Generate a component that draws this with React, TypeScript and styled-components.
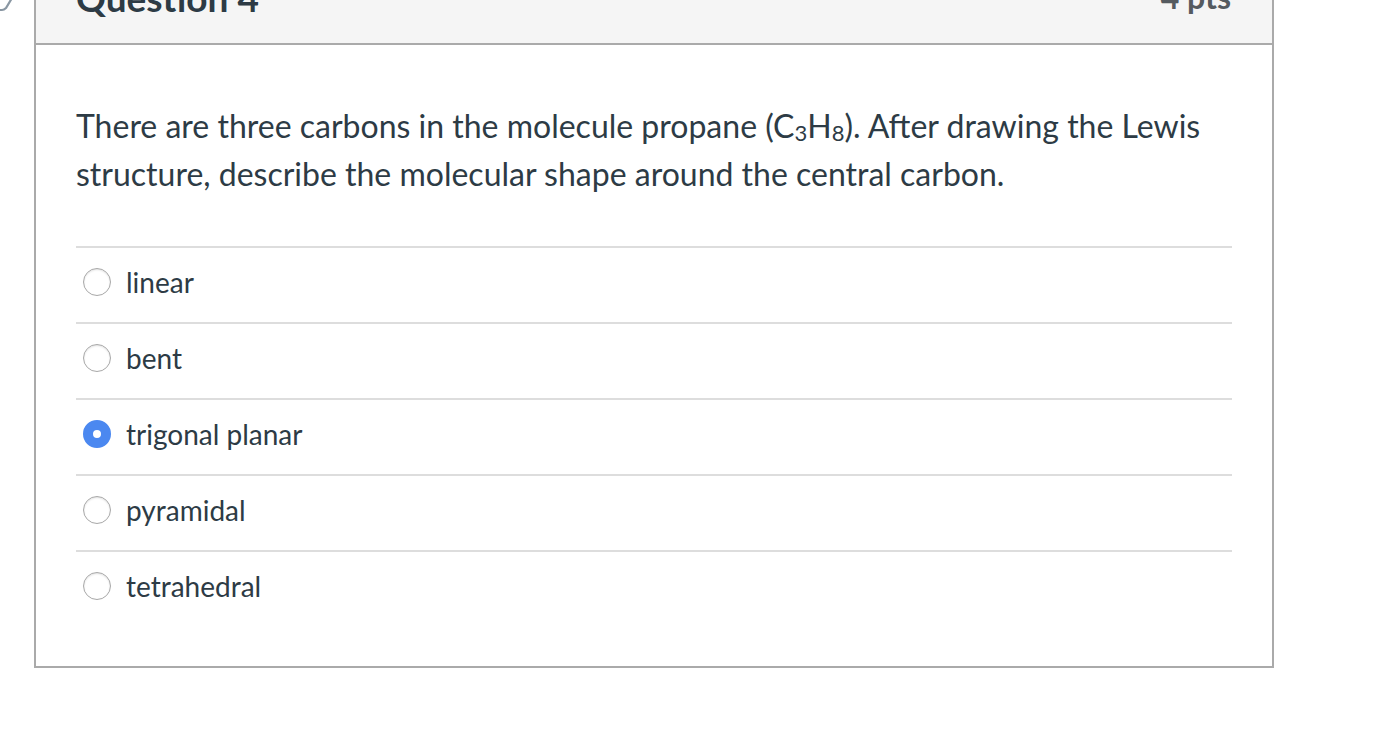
import React from 'react'
import styled, { createGlobalStyle } from 'styled-components';

const GlobalStyle = createGlobalStyle`
    body {
        margin: 0;
        background: #ffffff;
        font-family: Lato, "Liberation Sans", sans-serif;
        color: #2d3b45;
    }
`;

const answers = ['linear', 'bent', 'trigonal planar', 'pyramidal', 'tetrahedral'];

const App = () => {
    return (
        <>
            <GlobalStyle />
            <Page>
                <CheckMark width="14" height="12" viewBox="0 0 14 12">
                    <path d="M-4 10 L2 10 Q4 10 6 8 L12 -2" fill="none" stroke="#8a97a3" strokeWidth="2.2" strokeLinecap="round" />
                </CheckMark>
                <Card>
                    <Header>
                        <Title>Question 4</Title>
                        <Points>4 pts</Points>
                    </Header>
                    <Body>
                        <QuestionText>
                            There are three carbons in the molecule propane (C<Sub>3</Sub>H<Sub>8</Sub>). After drawing the Lewis structure, describe the molecular shape around the central carbon.
                        </QuestionText>
                        <AnswerList>
                            {answers.map(value => (
                                <Answer key={value}>
                                    <Radio checked={value === 'trigonal planar'} />
                                    <AnswerLabel>{value}</AnswerLabel>
                                </Answer>
                            ))}
                        </AnswerList>
                    </Body>
                </Card>
            </Page>
        </>
    );
}

const Page = styled("div")`
    position: relative;
    display: flow-root;
    padding: 0 126px 0 34px;
    width: 1240px;
`;

const CheckMark = styled("svg")`
    position: absolute;
    left: 0;
    top: 0;
    z-index: 2;
`;

const Card = styled("div")`
    margin-top: -33px;
    border: 2px solid #aaaaaa;
    background: #ffffff;
`;

const Header = styled("div")`
    display: flex;
    justify-content: space-between;
    align-items: center;
    height: 74px;
    padding: 0 41px 0 40px;
    background-color: #f5f5f5;
    border-bottom: 2px solid #aaaaaa;
`;

const Title = styled("h2")`
    margin: 0;
    font-size: 37px;
    font-weight: 700;
    color: #2d3b45;
    transform: translateY(-9px);
`;

const Points = styled("span")`
    font-size: 32px;
    font-weight: 700;
    color: #555b60;
    transform: translateY(-10px);
`;

const Body = styled("div")`
    padding: 57px 40px 40px 40px;
`;

const QuestionText = styled("p")`
    margin: 0;
    font-size: 32px;
    line-height: 48px;
    color: #2d3b45;
    padding-right: 10px;
`;

const Sub = styled("sub")`
    font-size: 22px;
    vertical-align: -3px;
    line-height: 0;
`;

const AnswerList = styled("div")`
    margin-top: 48px;
`;

const Answer = styled("div")`
    box-sizing: border-box;
    display: flex;
    align-items: center;
    height: 76px;
    padding: 0 0 6px 7px;
    border-top: 2px solid #dddddd;
`;

const Radio = styled("span")<{ checked?: boolean }>`
    box-sizing: border-box;
    flex-shrink: 0;
    width: 28px;
    height: 28px;
    border-radius: 50%;
    margin-right: 15px;
    border: ${p => p.checked ? '10px solid #4b88f0' : '1.5px solid #a8a8a8'};
    background: #ffffff;
    box-shadow: ${p => p.checked ? 'none' : 'inset 0 1px 2px rgba(0,0,0,0.12)'};
`;

const AnswerLabel = styled("span")`
    font-size: 28px;
    color: #2d3b45;
`;

export default App;
